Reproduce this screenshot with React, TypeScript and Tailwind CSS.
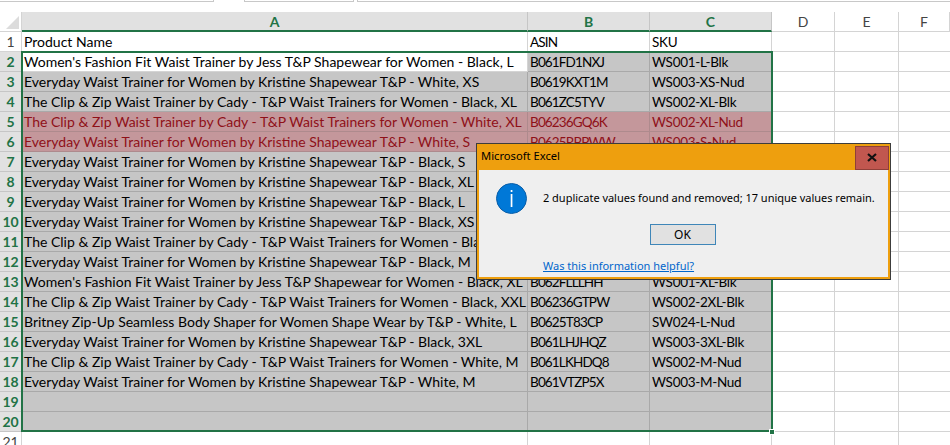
const rows: [string, string, string][] = [
  ['Product Name', 'ASIN', 'SKU'],
  ["Women's Fashion Fit Waist Trainer by Jess T&P Shapewear for Women - Black, L", 'B061FD1NXJ', 'WS001-L-Blk'],
  ['Everyday Waist Trainer for Women by Kristine Shapewear T&P - White, XS', 'B0619KXT1M', 'WS003-XS-Nud'],
  ['The Clip & Zip Waist Trainer by Cady - T&P Waist Trainers for Women - Black, XL', 'B061ZC5TYV', 'WS002-XL-Blk'],
  ['The Clip & Zip Waist Trainer by Cady - T&P Waist Trainers for Women - White, XL', 'B06236GQ6K', 'WS002-XL-Nud'],
  ['Everyday Waist Trainer for Women by Kristine Shapewear T&P - White, S', 'B0625RBPWW', 'WS003-S-Nud'],
  ['Everyday Waist Trainer for Women by Kristine Shapewear T&P - Black, S', '', ''],
  ['Everyday Waist Trainer for Women by Kristine Shapewear T&P - Black, XL', '', ''],
  ['Everyday Waist Trainer for Women by Kristine Shapewear T&P - Black, L', '', ''],
  ['Everyday Waist Trainer for Women by Kristine Shapewear T&P - Black, XS', '', ''],
  ['The Clip & Zip Waist Trainer by Cady - T&P Waist Trainers for Women - Black, L', '', ''],
  ['Everyday Waist Trainer for Women by Kristine Shapewear T&P - Black, M', '', ''],
  ["Women's Fashion Fit Waist Trainer by Jess T&P Shapewear for Women - Black, XL", 'B062FLLLHH', 'WS001-XL-Blk'],
  ['The Clip & Zip Waist Trainer by Cady - T&P Waist Trainers for Women - Black, XXL', 'B06236GTPW', 'WS002-2XL-Blk'],
  ['Britney Zip-Up Seamless Body Shaper for Women Shape Wear by T&P - White, L', 'B0625T83CP', 'SW024-L-Nud'],
  ['Everyday Waist Trainer for Women by Kristine Shapewear T&P - Black, 3XL', 'B061LHJHQZ', 'WS003-3XL-Blk'],
  ['The Clip & Zip Waist Trainer by Cady - T&P Waist Trainers for Women - White, M', 'B061LKHDQ8', 'WS002-M-Nud'],
  ['Everyday Waist Trainer for Women by Kristine Shapewear T&P - White, M', 'B061VTZP5X', 'WS003-M-Nud'],
  ['', '', ''],
  ['', '', ''],
  ['', '', ''],
]

const cols = ['A', 'B', 'C', 'D', 'E', 'F']

// Lato's digits and caps run wider than the sheet's font, so B and C are squeezed
const colText = ['text-[14px]', 'text-[13.5px] tracking-[-0.85px]', 'text-[13.5px] tracking-[-0.3px]']

function cellClass(row: number, col: number) {
  const base = `h-5 overflow-hidden whitespace-nowrap pl-[2px] pt-px leading-[18px] border-r border-b ${colText[col]} `
  if (row === 5 || row === 6) {
    return base + 'bg-[#c4979b] border-[#ae8a8d] text-[#8f1018]'
  }
  const selected = row >= 2 && row <= 20 && !(row === 2 && col === 0)
  if (selected) return base + 'bg-[#c6c6c6] border-[#a9a9a9] text-black'
  return base + 'bg-white border-[#d4d4d4] text-black'
}

function Sheet() {
  return (
    <div className="grid grid-cols-[22px_506px_122px_122px_63px_64px_1fr] auto-rows-[20px]">
      {/* corner */}
      <div className="flex items-end justify-end border-r border-b border-[#d4d4d4] bg-white pr-[2px] pb-[2px]">
        <svg width="13" height="13" viewBox="0 0 13 13"><path d="M13 0V13H0Z" fill="#dcdcdc" /></svg>
      </div>
      {cols.map((c, i) => (
        <div
          key={c}
          className={
            i < 3
              ? 'flex items-center justify-center border-r border-b-2 border-r-[#c6c6c6] border-b-[#217346] bg-[#e1e1e1] text-[14px] font-bold text-[#217346]'
              : 'flex items-center justify-center border-r border-b border-[#d4d4d4] bg-white text-[14px] text-[#444]'
          }
        >
          {c}
        </div>
      ))}
      {rows.map((r, idx) => {
        const n = idx + 1
        const active = n >= 2 && n <= 20
        return (
          <div key={n} className="contents">
            <div
              className={
                active
                  ? 'flex items-center justify-center border-r border-b border-[#c6c6c6] bg-[#e1e1e1] text-[14px] font-bold text-[#217346]'
                  : 'flex items-center justify-center border-r border-b border-[#d4d4d4] bg-white text-[14px] text-[#444]'
              }
            >
              {n}
            </div>
            {r.map((text, c) => (
              <div key={c} className={cellClass(n, c)}>
                {text}
              </div>
            ))}
            <div className="border-r border-b border-[#d4d4d4] bg-white" />
            <div className="border-r border-b border-[#d4d4d4] bg-white" />
            <div className="border-b border-[#d4d4d4] bg-white" />
          </div>
        )
      })}
    </div>
  )
}

function ExcelDialog() {
  return (
    <div className="absolute left-[476px] top-[143px] flex h-[137px] w-[415px] flex-col border border-[#3c3c3c] bg-[#ee9f0e] p-[1px] font-['Noto_Sans',sans-serif] text-black">
      <div className="flex h-[25px] shrink-0 items-center justify-between">
        <span className="pb-[2px] pl-[3px] text-[11.2px]">Microsoft Excel</span>
        <div className="flex h-[24px] w-[34px] items-center justify-center border border-[#8f3f38] bg-[#c1574f]">
          <svg width="10" height="9" viewBox="0 0 10 9">
            <path d="M1 1L9 8M9 1L1 8" stroke="#111" strokeWidth="2.2" />
          </svg>
        </div>
      </div>
      <div className="mx-px mb-px flex flex-1 flex-col bg-[#efefef]">
        <div className="flex items-center pt-[13px] pl-[17px]">
          <svg width="31" height="31" viewBox="0 0 31 31">
            <circle cx="15.5" cy="15.5" r="15" fill="#0078d7" stroke="#0a5ea8" />
            <rect x="14.7" y="7" width="1.7" height="2" fill="#fff" />
            <rect x="14.7" y="11" width="1.7" height="13" fill="#fff" />
          </svg>
          <span className="ml-[16px] whitespace-nowrap text-[11px] tracking-[-0.02px]">
            2 duplicate values found and removed; 17 unique values remain.
          </span>
        </div>
        <div className="flex justify-center pt-[10px]">
          <button className="mr-[2px] h-[21px] w-[66px] border border-[#3f86b8] bg-[#e1e1e1] text-[12px] leading-none">OK</button>
        </div>
        <a className="mt-[15px] ml-[64px] text-[11px] leading-none text-[#0066cc] underline">Was this information helpful?</a>
      </div>
    </div>
  )
}

export default function App() {
  return (
    <div className="relative h-[445px] w-[950px] overflow-hidden bg-white font-['Lato','Open_Sans',sans-serif]">
      {/* tabs of the ribbon just cut off at the top */}
      <div className="flex h-3 items-start">
        <div className="h-[2px] w-[214px] border-r border-b border-[#c8c8c8]" />
        <div className="ml-[30px] h-[2px] w-[110px] border-x border-b border-[#c8c8c8]" />
        <div className="ml-[3px] h-[2px] flex-1 border-l border-b border-[#c8c8c8]" />
      </div>
      <Sheet />
      {/* selection */}
      <div className="pointer-events-none absolute left-[21px] top-[51px] h-[381px] w-[752px] border-2 border-[#217346]" />
      <div className="absolute left-[769px] top-[429px] h-[6px] w-[6px] border border-white bg-[#217346]" />
      <ExcelDialog />
    </div>
  )
}
